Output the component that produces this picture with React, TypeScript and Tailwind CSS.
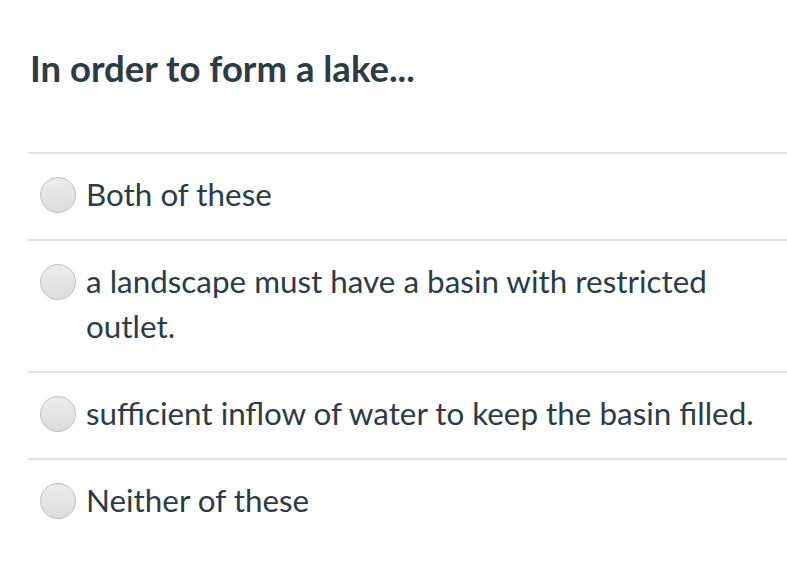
const options = [
  'Both of these',
  'a landscape must have a basin with restricted outlet.',
  'sufficient inflow of water to keep the basin filled.',
  'Neither of these',
];

function Radio() {
  return (
    <span className="mt-[5px] h-[36px] w-[36px] shrink-0 rounded-full border border-[#bdbdbd] bg-gradient-to-b from-[#ececec] to-[#dcdcdc]" />
  );
}

export default function App() {
  return (
    <div className="h-[564px] w-[787px] bg-white font-['Lato','Noto_Sans',sans-serif] text-[#2d3b45]">
      <div className="pl-[30px] pt-[40px]">
        <h1 className="text-[36.5px] font-bold leading-[56px]">In order to form a lake...</h1>
      </div>
      <div className="ml-[28px] mt-[56px]">
        {options.map((opt) => (
          <div key={opt} className="flex gap-[10px] border-t-2 border-[#e3e3e3] pb-[22px] pl-[12px] pt-[18px] pr-[30px]">
            <Radio />
            <span className="text-[31.4px] leading-[45px]">{opt}</span>
          </div>
        ))}
      </div>
    </div>
  );
}
